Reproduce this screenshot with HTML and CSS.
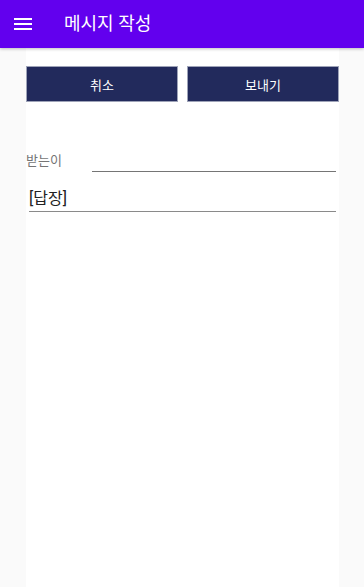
FILE: index.html
```html
<!DOCTYPE html>
<html lang="ko">
<head>
<meta charset="utf-8">
<title>메시지 작성</title>
<link rel="stylesheet" href="styles.css">
</head>
<body>
<header class="appbar">
  <span class="menu">
    <svg width="24" height="24" viewBox="0 0 24 24"><path d="M3 18h18v-2H3v2zm0-5h18v-2H3v2zm0-7v2h18V6H3z" fill="#fff"/></svg>
  </span>
  <h1 class="title">메시지 작성</h1>
</header>
<main class="card">
  <div class="actions">
    <button class="btn">취소</button>
    <button class="btn">보내기</button>
  </div>
  <div class="to-row">
    <label class="to-label">받는이</label>
    <div class="to-input"></div>
  </div>
  <div class="subject">[답장]</div>
</main>
</body>
</html>
```
FILE: styles.css
```css
* { box-sizing: border-box; }
html, body { margin: 0; height: 100%; }
body {
  background: #fafafa;
  font-family: Roboto, "Noto Sans CJK KR", sans-serif;
  overflow: hidden;
}
.appbar {
  height: 48px;
  background: #6200ee;
  display: flex;
  align-items: center;
  box-shadow: 0 1px 3px rgba(0,0,0,0.25);
  position: relative;
  z-index: 1;
}
.menu {
  width: 24px;
  height: 24px;
  margin-left: 11px;
  display: flex;
}
.title {
  margin: 0 0 0 29px;
  color: #fff;
  font-size: 18px;
  font-weight: 400;
  line-height: 24px;
}
.card {
  margin-left: 26px;
  width: 313px;
  height: 539px;
  background: #fff;
  padding-top: 18px;
}
.actions {
  display: flex;
  gap: 9px;
}
.btn {
  width: 152px;
  height: 36px;
  background: #222a5c;
  color: #fff;
  border: 1px solid #9ea3b8;
  font-family: inherit;
  font-size: 13px;
  padding: 0;
  margin: 0;
}
.to-row {
  display: flex;
  align-items: flex-end;
  margin-top: 46px;
  height: 24px;
}
.to-label {
  font-size: 13px;
  color: #757575;
  line-height: 16px;
  margin-bottom: 3px;
  width: 66px;
}
.to-input {
  width: 244px;
  height: 24px;
  border-bottom: 1px solid #757575;
}
.subject {
  margin: 16px 3px 0 3px;
  font-size: 16px;
  line-height: 22px;
  color: #222;
  border-bottom: 1px solid #8a8a8a;
  padding-bottom: 1px;
}
```
